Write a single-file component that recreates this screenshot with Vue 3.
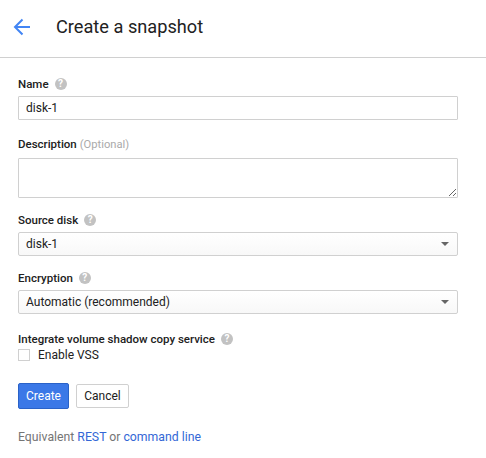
<template>
  <div class="page">
    <header class="top">
      <svg class="back" width="24" height="24" viewBox="0 0 24 24">
        <path d="M20 12H5M12.5 4.5 5 12l7.5 7.5" fill="none" stroke="#4285f4" stroke-width="2" />
      </svg>
      <h1>Create a snapshot</h1>
    </header>

    <form class="form" @submit.prevent>
      <div class="field name">
        <div class="label">Name <span class="help">?</span></div>
        <input class="text" type="text" value="disk-1" />
      </div>

      <div class="field">
        <div class="label desc">Description <span class="opt">(Optional)</span></div>
        <textarea class="area"></textarea>
      </div>

      <div v-for="sel in selects" :key="sel.label" class="field">
        <div class="label">{{ sel.label }} <span class="help">?</span></div>
        <div class="select">
          <span>{{ sel.value }}</span>
          <i class="caret"></i>
        </div>
      </div>

      <div class="vss">
        <div class="label">Integrate volume shadow copy service <span class="help">?</span></div>
        <label class="check"><span class="box"></span>Enable VSS</label>
      </div>

      <div class="buttons">
        <button class="btn primary" type="button">Create</button>
        <button class="btn" type="button">Cancel</button>
      </div>

      <div class="foot">Equivalent <a>REST</a> or <a>command line</a></div>
    </form>
  </div>
</template>

<script setup>
const selects = [
  { label: "Source disk", value: "disk-1" },
  { label: "Encryption", value: "Automatic (recommended)" },
];
</script>

<style>
html, body {
  background: #fff;
}
</style>

<style scoped>
.page {
  width: 486px;
  height: 458px;
  overflow: hidden;
  font-family: Roboto, "Liberation Sans", sans-serif;
  font-size: 12px;
  color: #212121;
  background: #fff;
}

.top {
  box-sizing: border-box;
  height: 58px;
  border-bottom: 1px solid #d0d0d0;
  display: flex;
  align-items: center;
  padding: 0 0 4px 10px;
}

.back {
  margin-right: 22px;
}

h1 {
  margin: 0;
  font-size: 18.2px;
  font-weight: 400;
  color: #212121;
}

.form {
  padding: 18px 28px 0 18px;
}

.field {
  margin-bottom: 14px;
}

.field.name {
  margin-bottom: 16px;
}

.label {
  display: flex;
  align-items: center;
  gap: 6px;
  height: 16px;
  margin-bottom: 4px;
  font-size: 11.5px;
  font-weight: 500;
}

.label.desc {
  margin-bottom: 6px;
}

.opt {
  margin-left: -3px;
  font-size: 11.2px;
  font-weight: 400;
  color: #aaa;
}

.help {
  width: 12px;
  height: 12px;
  border-radius: 50%;
  background: #c2c2c2;
  color: #fff;
  font-size: 10px;
  font-weight: 700;
  line-height: 12px;
  text-align: center;
}

.text, .area {
  display: block;
  box-sizing: border-box;
  width: 100%;
  border: 1px solid #d0d0d0;
  border-radius: 1px;
  padding: 0 7px;
  font: inherit;
  color: inherit;
  outline: none;
}

.text {
  height: 24px;
}

.area {
  height: 40px;
}

.select {
  box-sizing: border-box;
  height: 24px;
  display: flex;
  align-items: center;
  justify-content: space-between;
  padding: 0 7px;
  border: 1px solid #d0d0d0;
  border-radius: 2px;
  background: linear-gradient(#fff, #f8f8f8);
}

.caret {
  width: 0;
  height: 0;
  margin-right: 1px;
  border-left: 4px solid transparent;
  border-right: 4px solid transparent;
  border-top: 4px solid #666;
}

.vss {
  margin-top: 17px;
}

.vss .label {
  margin-bottom: 0;
}

.check {
  display: flex;
  align-items: center;
  height: 16px;
  line-height: 16px;
}

.box {
  box-sizing: border-box;
  width: 12px;
  height: 12px;
  margin-right: 8px;
  border: 1px solid #d0d0d0;
  background: #fff;
}

.buttons {
  display: flex;
  align-items: center;
  gap: 7px;
  margin-top: 20px;
}

.btn {
  box-sizing: border-box;
  height: 24px;
  width: 53px;
  padding: 0;
  border: 1px solid #d0d0d0;
  border-radius: 2px;
  background: #fff;
  font: inherit;
  color: #212121;
}

.primary {
  height: 26px;
  width: 51px;
  border-color: #2a62c8;
  background: #3b78e7;
  color: #fff;
}

.foot {
  margin-top: 20px;
  height: 16px;
  line-height: 16px;
  font-size: 12.25px;
  color: #757575;
}

.foot a {
  color: #3367d6;
}
</style>
